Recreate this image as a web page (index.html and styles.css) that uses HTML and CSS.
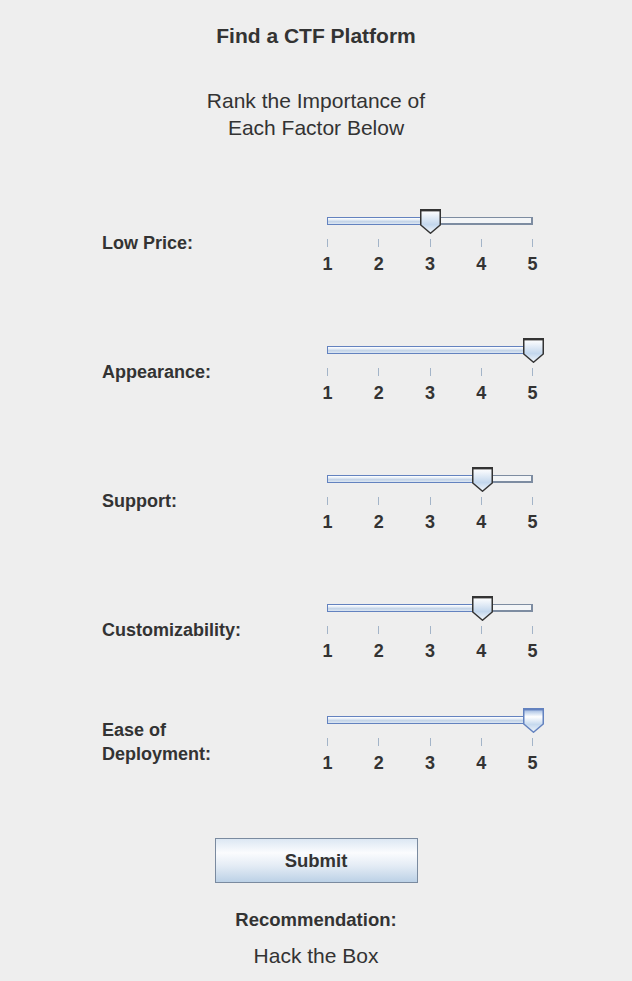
FILE: index.html
```html
<!DOCTYPE html>
<html lang="en">
<head>
    <meta charset="UTF-8">
    <meta name="viewport" content="width=device-width, initial-scale=1.0">
    <title>Find a CTF Platform</title>
    <link rel="stylesheet" href="styles.css">
</head>
<body>
    <svg class="defs" width="0" height="0">
        <defs>
            <linearGradient id="thumb-fill" x1="0" y1="0" x2="0" y2="1">
                <stop offset="0" stop-color="#ffffff"/>
                <stop offset="0.15" stop-color="#f2f6fb"/>
                <stop offset="0.62" stop-color="#c3d7ed"/>
                <stop offset="1" stop-color="#f4f8fc"/>
            </linearGradient>
            <linearGradient id="thumb-fill-focus" x1="0" y1="0" x2="0" y2="1">
                <stop offset="0" stop-color="#9db5de"/>
                <stop offset="0.18" stop-color="#d4e1f2"/>
                <stop offset="0.32" stop-color="#ffffff"/>
                <stop offset="0.66" stop-color="#c6d9ee"/>
                <stop offset="1" stop-color="#eef4fb"/>
            </linearGradient>
        </defs>
    </svg>

    <div class="app">
        <h1 class="title">Find a CTF Platform</h1>
        <p class="subtitle">Rank the Importance of<br>Each Factor Below</p>

        <div class="factors">
            <div class="factor">
                <div class="factor-label">Low Price:</div>
                <div class="slider">
                    <div class="rail">
                        <div class="track"><div class="fill" style="width: 50%"></div><div class="rest"></div></div>
                        <svg class="thumb" style="left: 50%" viewBox="0 0 21 25"><path d="M0.75 1.5 H20.25 V16 L10.5 24.2 L0.75 16 Z" fill="url(#thumb-fill)" stroke="#333" stroke-width="1.5"/><rect x="0" y="0" width="21" height="2.2" fill="#333"/></svg>
                    </div>
                    <div class="ticks"><span></span><span></span><span></span><span></span><span></span></div>
                    <div class="nums"><span>1</span><span>2</span><span>3</span><span>4</span><span>5</span></div>
                </div>
            </div>

            <div class="factor">
                <div class="factor-label">Appearance:</div>
                <div class="slider">
                    <div class="rail">
                        <div class="track"><div class="fill" style="width: 100%"></div><div class="rest"></div></div>
                        <svg class="thumb" style="left: 100%" viewBox="0 0 21 25"><path d="M0.75 1.5 H20.25 V16 L10.5 24.2 L0.75 16 Z" fill="url(#thumb-fill)" stroke="#333" stroke-width="1.5"/><rect x="0" y="0" width="21" height="2.2" fill="#333"/></svg>
                    </div>
                    <div class="ticks"><span></span><span></span><span></span><span></span><span></span></div>
                    <div class="nums"><span>1</span><span>2</span><span>3</span><span>4</span><span>5</span></div>
                </div>
            </div>

            <div class="factor">
                <div class="factor-label">Support:</div>
                <div class="slider">
                    <div class="rail">
                        <div class="track"><div class="fill" style="width: 75%"></div><div class="rest"></div></div>
                        <svg class="thumb" style="left: 75%" viewBox="0 0 21 25"><path d="M0.75 1.5 H20.25 V16 L10.5 24.2 L0.75 16 Z" fill="url(#thumb-fill)" stroke="#333" stroke-width="1.5"/><rect x="0" y="0" width="21" height="2.2" fill="#333"/></svg>
                    </div>
                    <div class="ticks"><span></span><span></span><span></span><span></span><span></span></div>
                    <div class="nums"><span>1</span><span>2</span><span>3</span><span>4</span><span>5</span></div>
                </div>
            </div>

            <div class="factor">
                <div class="factor-label">Customizability:</div>
                <div class="slider">
                    <div class="rail">
                        <div class="track"><div class="fill" style="width: 75%"></div><div class="rest"></div></div>
                        <svg class="thumb" style="left: 75%" viewBox="0 0 21 25"><path d="M0.75 1.5 H20.25 V16 L10.5 24.2 L0.75 16 Z" fill="url(#thumb-fill)" stroke="#333" stroke-width="1.5"/><rect x="0" y="0" width="21" height="2.2" fill="#333"/></svg>
                    </div>
                    <div class="ticks"><span></span><span></span><span></span><span></span><span></span></div>
                    <div class="nums"><span>1</span><span>2</span><span>3</span><span>4</span><span>5</span></div>
                </div>
            </div>

            <div class="factor factor-last">
                <div class="factor-label">Ease of<br>Deployment:</div>
                <div class="slider">
                    <div class="rail">
                        <div class="track"><div class="fill" style="width: 100%"></div><div class="rest"></div></div>
                        <svg class="thumb" style="left: 100%" viewBox="0 0 21 25"><path d="M0.75 1.5 H20.25 V16 L10.5 24.2 L0.75 16 Z" fill="url(#thumb-fill-focus)" stroke="#6382bf" stroke-width="1.5"/><rect x="0" y="0" width="21" height="2.2" fill="#6382bf"/></svg>
                    </div>
                    <div class="ticks"><span></span><span></span><span></span><span></span><span></span></div>
                    <div class="nums"><span>1</span><span>2</span><span>3</span><span>4</span><span>5</span></div>
                </div>
            </div>
        </div>

        <div class="actions">
            <button class="submit-button">Submit</button>
        </div>

        <div class="result-title">Recommendation:</div>
        <div class="result">Hack the Box</div>
    </div>
</body>
</html>
```

FILE: styles.css
```css
body {
    margin: 0;
    background-color: #eeeeee;
    color: #333333;
    font-family: "Liberation Sans", Arial, sans-serif;
}

.defs {
    position: absolute;
}

.app {
    width: 632px;
}

.title {
    margin: 0;
    padding-top: 24px;
    font-size: 21px;
    line-height: 24px;
    font-weight: bold;
    text-align: center;
}

.subtitle {
    margin: 39px 0 0;
    font-size: 21px;
    line-height: 27px;
    text-align: center;
}

.factors {
    margin-top: 68px;
    padding-left: 102px;
}

.factor {
    display: flex;
    align-items: center;
}

.factor + .factor {
    margin-top: 64px;
}

.factor.factor-last {
    margin-top: 47px;
}

.factor-label {
    width: 214px;
    padding-top: 3px;
    font-size: 18px;
    line-height: 22px;
    font-weight: bold;
}

.factor-last .factor-label {
    line-height: 24px;
}

.slider {
    width: 228px;
}

.rail {
    position: relative;
    margin: 0 11px;
    height: 25px;
}

.track {
    display: flex;
    position: relative;
    top: 8px;
    height: 8px;
}

.fill {
    box-sizing: border-box;
    height: 8px;
    border: 1px solid #6382bf;
    border-right: none;
    background: linear-gradient(#ffffff 0, #e6eef7 30%, #c3d3e7 60%, #dce7f3 100%);
}

.rest {
    flex: 1;
    box-sizing: border-box;
    height: 8px;
    border: 1px solid #7d8ca1;
    border-left: none;
    border-right-width: 2px;
    border-bottom-width: 2px;
    background-color: #f3f5f7;
}

.thumb {
    position: absolute;
    top: 0;
    width: 21px;
    height: 25px;
    transform: translateX(-10px);
}

.ticks {
    display: flex;
    justify-content: space-between;
    margin: 5px 11px 0;
}

.ticks span {
    width: 1px;
    height: 8px;
    background-color: #a3b4c8;
}

.nums {
    display: flex;
    justify-content: space-between;
    margin: 7px 11px 0;
    font-size: 18px;
    line-height: 20px;
    font-weight: bold;
}

.nums span {
    width: 1px;
    display: flex;
    justify-content: center;
}

.actions {
    margin-top: 65px;
    text-align: center;
}

.submit-button {
    width: 203px;
    height: 45px;
    border: 1px solid #7a8a9f;
    background: linear-gradient(#dce7f3 0, #fbfcfe 32%, #e4ecf5 62%, #bcd1e6 100%);
    color: #333333;
    font-family: "Liberation Sans", Arial, sans-serif;
    font-size: 18.5px;
    font-weight: bold;
    padding: 0;
}

.result-title {
    margin-top: 26px;
    font-size: 18.5px;
    line-height: 22px;
    font-weight: bold;
    text-align: center;
}

.result {
    margin-top: 13px;
    font-size: 21px;
    line-height: 24px;
    text-align: center;
}
```
